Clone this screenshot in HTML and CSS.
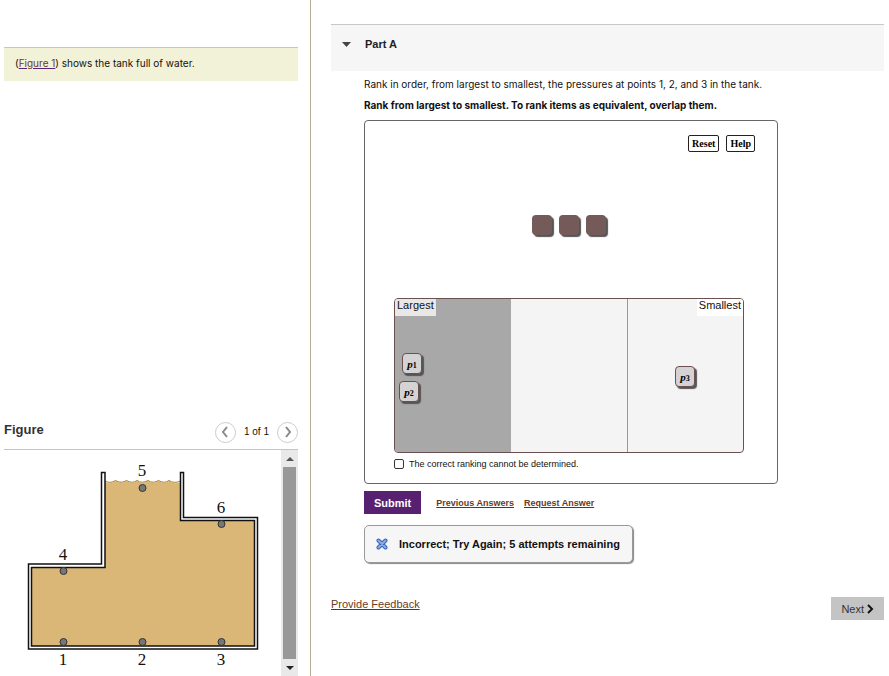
FILE: index.html
```
<!DOCTYPE html>
<html lang="en">

<head>
    <meta charset="UTF-8" />
    <meta name="viewport" content="width=device-width, initial-scale=1.0" />
    <title>Part A</title>
    <link rel="stylesheet" href="styles.css">
</head>

<body>
    <aside class="sidebar">
        <p class="note">(<a href="#figure">Figure 1</a>) shows the tank full of water.</p>

        <section class="figure" id="figure">
            <header class="figure-header">
                <h2>Figure</h2>
                <div class="pager">
                    <button type="button" aria-label="Previous figure">
                        <svg width="19" height="20" viewBox="0 0 19 20"><path d="M11 4 7 9 11 14" /></svg>
                    </button>
                    <span>1 of 1</span>
                    <button type="button" aria-label="Next figure">
                        <svg width="19" height="20" viewBox="0 0 19 20"><path d="M8 4 12 9 8 14" /></svg>
                    </button>
                </div>
            </header>
            <div class="figure-body">
                <svg class="tank" width="277" height="226" viewBox="4 450 277 226" role="img" aria-label="Tank with six points">
                    <path class="water" d="M105 482Q110 485 115.500 481Q121 485 126.500 481Q132 485 137 481Q142 485 148 481Q153 485 158.500 481Q164 485 169 481Q174 485 180.500 482V520.500H254.500V646H31.500V567H105Z" />
                    <path class="surface" d="M105 481Q110 484 115.500 480.500Q121 484 126.500 480.500Q132 484 137 480.500Q142 484 148 480.500Q153 484 158.500 480.500Q164 484 169 480.500Q174 484 180.500 481" />
                    <path class="wall" d="M101.500 472.500V564H28.500V649H257.500V517.500H183.500V472.500H180.500V520.500H254.500V646H31.500V567.500H105V472.500Z" />
                    <g class="points">
                        <circle cx="63.500" cy="642" r="3.500" />
                        <circle cx="142.500" cy="642" r="3.500" />
                        <circle cx="221.500" cy="642" r="3.500" />
                        <circle cx="63.500" cy="571" r="3.500" />
                        <circle cx="142.500" cy="488" r="3.500" />
                        <circle cx="221.500" cy="524" r="3.500" />
                    </g>
                    <g class="numbers">
                        <text x="63" y="665">1</text>
                        <text x="142" y="665">2</text>
                        <text x="221" y="665">3</text>
                        <text x="63" y="560">4</text>
                        <text x="142" y="476">5</text>
                        <text x="221" y="513">6</text>
                    </g>
                </svg>
                <div class="scrollbar">
                    <button type="button" aria-label="Scroll up"><svg width="8" height="4" viewBox="0 0 8 4"><path d="M0 4 4 0 8 4Z" fill="#555" /></svg></button>
                    <div class="thumb"></div>
                    <button type="button" aria-label="Scroll down"><svg width="8" height="4" viewBox="0 0 8 4"><path d="M0 0H8L4 4Z" fill="#222" /></svg></button>
                </div>
            </div>
        </section>
    </aside>

    <main>
        <header class="part-header">
            <svg width="9" height="5" viewBox="0 0 9 5"><path d="M0 0H9L4.500 5Z" fill="#444" /></svg>
            <h1>Part A</h1>
        </header>

        <div class="part">
            <p class="question">Rank in order, from largest to smallest, the pressures at points 1, 2, and 3 in the tank.</p>
            <p class="instructions">Rank from largest to smallest. To rank items as equivalent, overlap them.</p>

            <div class="ranking">
                <div class="tools">
                    <button type="button">Reset</button>
                    <button type="button">Help</button>
                </div>
                <div class="tray">
                    <span class="slot"></span>
                    <span class="slot"></span>
                    <span class="slot"></span>
                </div>
                <div class="bins">
                    <div class="bin selected">
                        <span class="label">Largest</span>
                        <button type="button" class="tile p1"><i>p</i><b>1</b></button>
                        <button type="button" class="tile p2"><i>p</i><b>2</b></button>
                    </div>
                    <div class="bin"></div>
                    <div class="bin last">
                        <span class="label">Smallest</span>
                        <button type="button" class="tile p3"><i>p</i><b>3</b></button>
                    </div>
                </div>
                <div class="undetermined">
                    <input type="checkbox" id="undetermined">
                    <label for="undetermined">The correct ranking cannot be determined.</label>
                </div>
            </div>

            <div class="actions">
                <button type="button" class="submit">Submit</button>
                <a href="#">Previous Answers</a>
                <a href="#">Request Answer</a>
            </div>

            <div class="feedback">
                <svg width="12" height="12" viewBox="0 0 12 12">
                    <path d="M2.500 2.500 9.500 9.500M9.500 2.500 2.500 9.500" stroke="#3a5fc0" stroke-width="4" stroke-linecap="round" />
                    <path d="M2.500 2.500 9.500 9.500M9.500 2.500 2.500 9.500" stroke="#86b0dc" stroke-width="2" stroke-linecap="round" />
                </svg>
                <strong>Incorrect; Try Again; 5 attempts remaining</strong>
            </div>
        </div>

        <footer>
            <a href="#">Provide Feedback</a>
            <button type="button" class="next">Next
                <svg width="7" height="10" viewBox="0 0 7 10"><path d="M1 1 5 5 1 9" /></svg>
            </button>
        </footer>
    </main>
</body>

</html>
```
FILE: styles.css
```
* {
    margin: 0;
    padding: 0;
    box-sizing: border-box;
}

body {
    font-family: "Liberation Sans", Arial, sans-serif;
    font-size: 10px;
    line-height: 14px;
    color: #111;
    background: #fff;
    min-height: 100vh;
    display: grid;
    grid-template-columns: 311px 1fr;
}

button {
    font-family: inherit;
    cursor: pointer;
}

svg {
    display: block;
    fill: none;
}

a {
    color: #6b3a1c;
    text-decoration-color: #5a2478;
    text-underline-offset: 1px;
}

/* left column */

.sidebar {
    display: flex;
    flex-direction: column;
    justify-content: space-between;
    padding: 47px 12px 0 4px;
    border-right: 1px solid #b8a898;
}

.note {
    background: #f2f2d9;
    border-top: 1px solid #c4c8c4;
    padding: 8px 11px 11px;
    font-family: Inter, sans-serif;
}

.figure-header {
    display: flex;
    justify-content: space-between;
    height: 33px;
    border-bottom: 1px solid #c4c4c4;
}

.figure-header h2 {
    font-size: 13px;
    line-height: 26px;
    color: #333;
}

.pager {
    display: flex;
    align-items: center;
    gap: 8px;
    height: 30px;
}

.pager button {
    width: 21px;
    height: 21px;
    border: 1px solid #ccc;
    border-radius: 50%;
    background: #fff;
}

.pager path {
    stroke: #888;
    stroke-width: 2;
}

.figure-body {
    display: flex;
    justify-content: space-between;
}

.water {
    fill: #dab777;
}

.surface {
    stroke: #a87a20;
}

.wall {
    fill: #fff;
    stroke: #111;
    stroke-width: 1.5;
}

.points {
    fill: #777;
    stroke: #333;
}

.numbers {
    font-family: "Liberation Serif", serif;
    font-size: 17px;
    text-anchor: middle;
    fill: #111;
}

.scrollbar {
    width: 17px;
    padding: 0 2px;
    background: #e9e9e9;
    display: flex;
    flex-direction: column;
}

.scrollbar button {
    height: 17px;
    border: none;
    background: none;
    display: grid;
    place-items: center;
}

.thumb {
    flex: 1;
    background: #989898;
}

/* right column */

main {
    padding: 24px 5px 0 20px;
}

.part-header {
    display: flex;
    align-items: center;
    gap: 14px;
    height: 47px;
    padding: 0 11px 8px;
    background: #f6f6f6;
    border-top: 1px solid #c8c8c8;
}

.part-header h1 {
    font-size: 11px;
    color: #222;
}

.part {
    padding: 6px 0 0 33px;
}

.question,
.instructions {
    font-family: Inter, sans-serif;
}

.instructions {
    margin: 7px 0 8px;
    font-weight: bold;
}

.ranking {
    max-width: 414px;
    border: 1px solid #666;
    border-radius: 4px;
    padding: 14px 33px 12px 29px;
}

.tools {
    display: flex;
    justify-content: flex-end;
    gap: 7px;
    margin-right: -11px;
}

.tools button {
    height: 17px;
    padding: 0 3px;
    font-family: "Liberation Serif", serif;
    font-size: 10px;
    line-height: 14px;
    font-weight: bold;
    background: #fff;
    border: 1px solid #222;
    border-radius: 2px;
}

.tray {
    display: flex;
    justify-content: center;
    gap: 7px;
    margin: 63px 0;
}

.slot {
    width: 20px;
    height: 20px;
    border-radius: 4px;
    background: #755a5a;
    box-shadow: 2px 2px 1px #555;
}

.bins {
    display: grid;
    grid-template-columns: repeat(3, 1fr);
    height: 155px;
    border: 1px solid #6a5050;
    border-radius: 4px;
    background: #f4f4f4;
    overflow: hidden;
}

.bin {
    position: relative;
}

.selected {
    background: #a8a8a8;
}

.last {
    border-left: 1px solid #999;
    text-align: right;
}

.label {
    display: inline-block;
    height: 17px;
    padding: 0 2px;
    font-size: 11px;
    line-height: 12px;
    background: #fff;
}

.selected .label {
    background: #e8e8e8;
}

.tile {
    position: absolute;
    width: 20px;
    height: 21px;
    border: 1px solid #6a5050;
    border-radius: 4px;
    background: #d4d2d2;
    box-shadow: 2px 2px 1px #555;
    font-family: "Liberation Serif", serif;
    font-weight: bold;
    font-size: 11px;
}

.tile b {
    font-size: 8px;
}

.p1 {
    left: 7px;
    top: 54px;
}

.p2 {
    left: 4px;
    top: 82px;
}

.p3 {
    left: 47px;
    top: 67px;
}

.undetermined {
    display: flex;
    align-items: center;
    gap: 5px;
    margin-top: 4px;
    font-size: 9px;
}

.undetermined input {
    appearance: none;
    width: 10px;
    height: 10px;
    border: 1px solid #333;
    border-radius: 2px;
}

.actions {
    display: flex;
    align-items: center;
    gap: 10px;
    margin-top: 7px;
    font-size: 9px;
    font-weight: bold;
}

.submit {
    height: 23px;
    padding: 0 10px;
    margin-right: 5px;
    border: none;
    background: #582070;
    color: #fff;
    font-size: 11px;
    font-weight: bold;
}

.feedback {
    display: flex;
    align-items: center;
    gap: 11px;
    width: fit-content;
    height: 38px;
    margin-top: 11px;
    padding: 0 12px 0 11px;
    font-size: 11px;
    background: #f6f6f6;
    border: 1px solid #999;
    border-radius: 5px;
    box-shadow: 1px 1px 1px #888;
}

footer {
    display: flex;
    justify-content: space-between;
    margin-top: 34px;
    font-size: 11px;
}

.next {
    display: flex;
    align-items: center;
    gap: 3px;
    height: 23px;
    padding: 0 10px;
    border: none;
    background: #c4c4c4;
    font-size: 11px;
    color: #333;
}

.next path {
    stroke: #111;
    stroke-width: 2;
}
```
